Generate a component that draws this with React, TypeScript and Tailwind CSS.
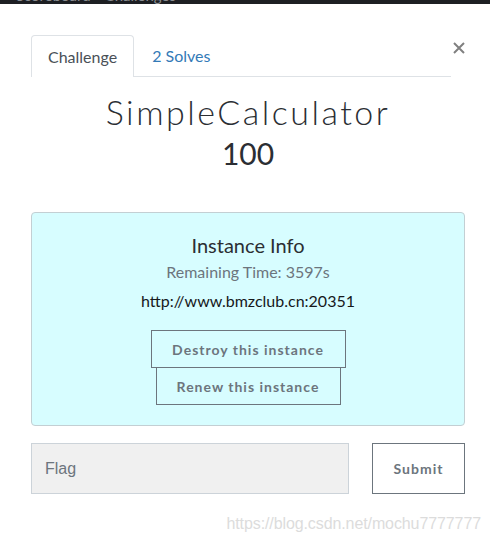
import React from 'react';

export default function App() {
  return (
    <div className="w-[490px] h-[541px] bg-white overflow-hidden" style={{ fontFamily: 'Lato, "Open Sans", sans-serif' }}>
      {/* Navbar peeking above modal */}
      <div className="h-[4px] bg-[#1d1f23] overflow-hidden">
        <div className="-mt-[13px] pl-[16px] flex gap-[14px] text-[15px] text-[#8a8d91] leading-[16px]">
          <span>Scoreboard</span>
          <span>Challenges</span>
        </div>
      </div>

      <div className="pl-[31px] pr-[25px]">
        {/* Tabs */}
        <div className="flex mt-[31px]">
          <div className="flex-1 flex border-b border-[#dee2e6]">
            <div className="h-[42px] px-[16px] flex items-center border border-b-0 border-[#dee2e6] rounded-t-[4px] -mb-px bg-white text-[16px] text-[#495057]">
              Challenge
            </div>
            <div className="h-[41px] px-[18px] flex items-center text-[16px] text-[#337ab7]">
              2 Solves
            </div>
          </div>
          <div className="w-[14px] flex justify-end pt-[5px]">
            <svg width="12" height="12" viewBox="0 0 12 12" className="mt-[2px]">
              <path d="M1 1L11 11M11 1L1 11" stroke="#808080" strokeWidth="2" />
            </svg>
          </div>
        </div>

        {/* Title */}
        <div className="text-center mt-[13px]">
          <h1 className="text-[34px] leading-[44px] font-light tracking-[2.5px] text-[#2b2e33]">SimpleCalculator</h1>
          <div className="text-[30px] leading-[36px] text-[#2b2e33] mt-[1px]">100</div>
        </div>

        {/* Instance card */}
        <div className="mt-[41px] bg-[#d7fdff] border border-[#c3cfd3] rounded-[4px] h-[214px] flex flex-col items-center pt-[19px]">
          <div className="text-[20px] leading-[26px] text-[#2b2e33]">Instance Info</div>
          <div className="text-[16px] leading-[20px] text-[#6c757d] mt-[4px]">Remaining Time: 3597s</div>
          <div className="text-[16px] leading-[20px] text-[#16181b] mt-[9px]">http://www.bmzclub.cn:20351</div>
          <div className="flex flex-col items-center mt-[19px]">
            <button className="w-[195px] h-[38px] border border-[#6c757d] text-[14px] font-bold tracking-[1px] text-[#6c757d]">
              Destroy this instance
            </button>
            <button className="w-[185px] h-[38px] border border-[#6c757d] text-[14px] font-bold tracking-[1px] text-[#6c757d] -mt-px">
              Renew this instance
            </button>
          </div>
        </div>

        {/* Flag form */}
        <div className="flex mt-[17px] gap-[23px]">
          <input
            placeholder="Flag"
            className="w-[318px] h-[51px] bg-[#f0f0f0] border border-[#ccd3d9] px-[13px] text-[16px] placeholder-[#6c757d] outline-none"
            style={{ fontFamily: '"Liberation Sans", Arial, sans-serif' }}
          />
          <button className="w-[93px] h-[51px] border border-[#6c757d] text-[14px] font-bold tracking-[1px] text-[#6c757d]">
            Submit
          </button>
        </div>

        <div
          className="text-right text-[16px] text-[#dcdcdc] mt-[18px] -mr-[16px] tracking-[-0.1px]"
          style={{ fontFamily: '"Liberation Sans", Arial, sans-serif' }}
        >
          https://blog.csdn.net/mochu7777777
        </div>
      </div>
    </div>
  );
}
